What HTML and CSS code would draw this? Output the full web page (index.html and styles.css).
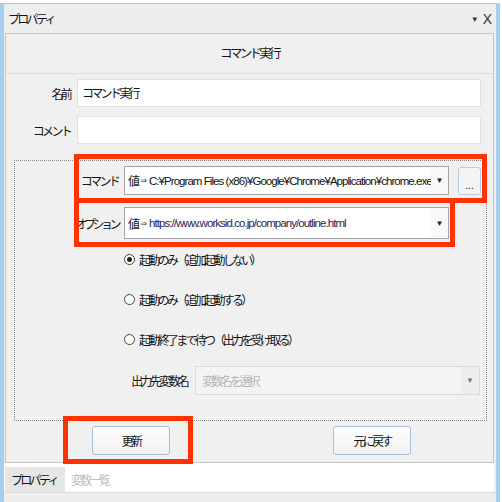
FILE: index.html
```html
<!DOCTYPE html>
<html lang="ja">

<head>
    <meta charset="UTF-8">
    <title>プロパティ</title>
    <link rel="stylesheet" href="styles.css">
</head>

<body>
    <div class="frame">
        <!-- Title bar -->
        <div class="titlebar">
            <span class="jp">プロパティ</span>
            <span class="tools"><span class="pin">▼</span> X</span>
        </div>

        <!-- Property panel -->
        <div class="panel">
            <div class="panel-head jp">コマンド実行</div>

            <div class="field">
                <label class="jp">名前</label>
                <div class="textbox jp">コマンド実行</div>
            </div>
            <div class="field">
                <label class="jp">コメント</label>
                <div class="textbox"></div>
            </div>

            <div class="group">
                <div class="grow">
                    <label class="jp">コマンド</label>
                    <div class="combo">
                        <span class="prefix"><span class="jp">値</span><span class="arrow-r">⇒</span></span>
                        <span class="value">C:¥Program Files (x86)¥Google¥Chrome¥Application¥chrome.exe</span>
                        <span class="drop">▼</span>
                    </div>
                    <button class="browse">...</button>
                </div>
                <div class="grow second">
                    <label class="jp narrow">オプション</label>
                    <div class="combo tall">
                        <span class="prefix"><span class="jp">値</span><span class="arrow-r">⇒</span></span>
                        <span class="value url">https://www.worksid.co.jp/company/outline.html</span>
                        <span class="drop">▼</span>
                    </div>
                </div>

                <div class="radios">
                    <div class="radio"><span class="dot checked"></span><span class="jp">起動のみ（追加起動しない）</span></div>
                    <div class="radio"><span class="dot"></span><span class="jp">起動のみ（追加起動する）</span></div>
                    <div class="radio"><span class="dot"></span><span class="jp">起動終了まで待つ（出力を受け取る）</span></div>
                </div>

                <div class="outrow">
                    <label class="jp">出力先変数名</label>
                    <div class="combo disabled">
                        <span class="value jp">変数名を選択</span>
                        <span class="drop">▼</span>
                    </div>
                </div>
            </div>

            <div class="actions">
                <button class="btn jp">更新</button>
                <button class="btn jp">元に戻す</button>
            </div>
        </div>

        <!-- Bottom tabs -->
        <div class="tabbar">
            <span class="tab active jp">プロパティ</span>
            <span class="tab jp">変数一覧</span>
        </div>
        <div class="footer"></div>
    </div>

    <!-- Annotation marks -->
    <div class="mark mark-command"></div>
    <div class="mark mark-option"></div>
    <div class="mark mark-update"></div>
</body>

</html>
```

FILE: styles.css
```css
/* Reset */
* {
    margin: 0;
    padding: 0;
    box-sizing: border-box;
}

body {
    font-family: "Liberation Sans", "Noto Sans CJK JP", sans-serif;
    font-size: 12px;
    color: #1a1a1a;
    background-color: #fff;
}

.jp {
    font-family: "Noto Sans CJK JP", sans-serif;
    font-size: 12px;
    letter-spacing: -2.7px;
    color: #141414;
}

.jp.narrow {
    letter-spacing: -3.5px;
}

/* Window frame */
.frame {
    width: 500px;
    height: 499px;
    margin-top: 3px;
    border: solid #a6cdf2;
    border-width: 1px 4px 0 4px;
    background-color: #eeeeee;
    display: flex;
    flex-direction: column;
}

.titlebar {
    height: 29px;
    padding: 0 4px 0 4px;
    display: flex;
    align-items: center;
    justify-content: space-between;
}

.tools {
    font-family: "Liberation Sans", sans-serif;
    font-size: 14px;
    color: #333;
}

.pin {
    font-size: 8px;
    vertical-align: 2px;
}

/* Panel */
.panel {
    height: 430px;
    margin: 0 2px 0 1px;
    border: 1px solid #c6c6c6;
    background-color: #f0f0f0;
}

.panel-head {
    height: 40px;
    line-height: 38px;
    text-align: center;
    font-size: 12.5px;
    border-bottom: 1px solid #dcdcdc;
}

.field {
    display: flex;
    align-items: center;
    margin-top: 5px;
}

.field + .field {
    margin-top: 9px;
}

.field label {
    width: 64px;
    margin-right: 7px;
    text-align: right;
}

.textbox {
    width: 404px;
    height: 28px;
    line-height: 26px;
    padding-left: 4px;
    background-color: #fff;
    border: 1px solid #e2e2e2;
}

/* Dashed group */
.group {
    height: 261px;
    margin: 16px 6px 0 8px;
    padding-top: 5px;
    border: 1px dotted #8a8a8a;
}

.grow {
    display: flex;
    align-items: center;
}

.grow.second {
    margin-top: 12px;
}

.grow label {
    width: 103px;
    margin-right: 6px;
    text-align: right;
}

.combo {
    width: 325px;
    height: 29px;
    display: flex;
    align-items: center;
    background-color: #fff;
    border: 1px solid #a6a6a6;
}

.combo.tall {
    height: 32px;
}

.prefix {
    display: flex;
    align-items: center;
    padding-left: 3px;
    width: 24px;
    flex-shrink: 0;
}

.arrow-r {
    font-family: "DejaVu Sans", sans-serif;
    font-size: 8px;
    margin-left: 3px;
    color: #333;
}

.value {
    flex: 1;
    white-space: nowrap;
    overflow: hidden;
    font-size: 11.5px;
    letter-spacing: -0.95px;
    color: #111;
}

.value.url {
    color: #2e2450;
}

.drop {
    width: 17px;
    height: 100%;
    display: flex;
    align-items: center;
    justify-content: center;
    font-size: 8px;
    color: #222;
    background-color: #f8f8f8;
}

.browse {
    width: 23px;
    height: 28px;
    margin-left: 9px;
    padding-top: 10px;
    font-size: 10px;
    line-height: 10px;
    border: 1px solid #b6cde4;
    border-radius: 3px;
    background-color: #f4f4f4;
}

/* Radio list */
.radios {
    padding-left: 109px;
}

.radio {
    height: 40px;
    display: flex;
    align-items: center;
}

.dot {
    width: 11px;
    height: 11px;
    margin-right: 4px;
    border: 1px solid #444;
    border-radius: 50%;
    background-color: #fff;
    display: flex;
    align-items: center;
    justify-content: center;
}

.dot.checked::after {
    content: "";
    width: 5px;
    height: 5px;
    border-radius: 50%;
    background-color: #222;
}

/* Output variable row */
.outrow {
    display: flex;
    align-items: center;
    margin-top: 7px;
}

.outrow label {
    width: 172px;
    margin-right: 8px;
    text-align: right;
}

.combo.disabled {
    width: 285px;
    background-color: #f4f4f4;
    border-color: #dadada;
}

.combo.disabled .value {
    padding-left: 6px;
    font-size: 12px;
    letter-spacing: -2.7px;
    color: #b4b4b4;
}

.combo.disabled .drop {
    width: 18px;
    color: #777;
    background-color: #eeeeee;
}

/* Buttons */
.actions {
    display: flex;
    margin-top: 5px;
    padding-left: 86px;
    gap: 163px;
}

.btn {
    width: 78px;
    height: 29px;
    border: 1px solid #a9bdd6;
    border-radius: 3px;
    background: linear-gradient(#fdfdfd, #f1f1f1);
}

/* Bottom tabs */
.tabbar {
    height: 29px;
    background-color: #fff;
    display: flex;
    align-items: flex-end;
    margin-right: 2px;
    padding-left: 1px;
}

.tab {
    height: 25px;
    line-height: 25px;
    padding: 0 8px 0 6px;
}

.tab + .tab {
    color: #bdbdbd;
}

.tab.active {
    background-color: #e6e6e6;
}

.footer {
    flex: 1;
    border-top: 1px solid #dadada;
    background-color: #eeeeee;
}

/* Red annotation marks */
.mark {
    position: absolute;
    border: 5px solid #ff3300;
}

.mark-command {
    left: 74px;
    top: 154px;
    width: 413px;
    height: 49px;
}

.mark-option {
    left: 74px;
    top: 198px;
    width: 381px;
    height: 49px;
}

.mark-update {
    left: 63px;
    top: 416px;
    width: 130px;
    height: 48px;
}
```
